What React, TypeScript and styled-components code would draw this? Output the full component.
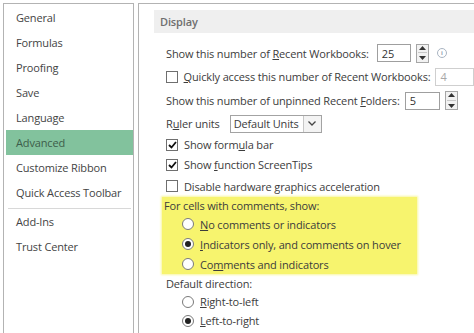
import React from "react";
import styled, { createGlobalStyle } from "styled-components";

const Global = createGlobalStyle`
  html, body { margin: 0; padding: 0; background: #fff; }
  body { font-family: "Open Sans", "Noto Sans", sans-serif; font-size: 11px; color: #3c3c3c; letter-spacing: -0.15px; }
`;

const Page = styled.div`
  display: flex;
  width: 474px;
  height: 333px;
  padding: 3px 0 0 3px;
  box-sizing: border-box;
  overflow: hidden;
  gap: 4px;
`;

const Nav = styled.div`
  width: 131px;
  flex: none;
  border: 1px solid #b3b3b3;
  border-bottom: none;
  box-sizing: border-box;
  padding-top: 1px;
  display: flex;
  flex-direction: column;
`;

const NavItem = styled.div<{ $active?: boolean }>`
  height: 25px;
  display: flex;
  align-items: center;
  padding-left: 10px;
  margin-left: 2px;
  color: ${(p) => (p.$active ? "#3d5d4a" : "#444")};
  background: ${(p) => (p.$active ? "#82c29d" : "transparent")};
`;

const NavSep = styled.div`
  height: 1px;
  background: #d8d8d8;
  margin: 3px 2px 0 4px;
`;

const Main = styled.div`
  flex: 1;
  border-left: 1px solid #b3b3b3;
  border-top: 1px solid #b3b3b3;
  padding-top: 6px;
  display: flex;
  flex-direction: column;
  min-width: 0;
`;

const Header = styled.div`
  height: 23px;
  margin-left: 15px;
  background: #efefef;
  display: flex;
  align-items: center;
  padding-left: 6px;
  font-weight: 600;
  color: #6e6e6e;
`;

const Body = styled.div`
  margin-top: 9px;
  display: flex;
  flex-direction: column;
`;

const Row = styled.div<{ $h: number; $indent?: number }>`
  height: ${(p) => p.$h}px;
  display: flex;
  align-items: center;
  padding-left: ${(p) => p.$indent ?? 27}px;
  white-space: nowrap;
`;

const Highlight = styled.div`
  margin-left: 23px;
  width: 255px;
  background: #f7f46e;
  box-shadow: 0 0 2px 1px #f9f7a0;
  display: flex;
  flex-direction: column;
`;

const Label = styled.span<{ $gap?: number }>`
  margin-right: ${(p) => p.$gap ?? 0}px;
`;

const U = styled.span`
  text-decoration: underline;
  text-underline-offset: 1px;
`;

const NumBox = styled.div<{ $disabled?: boolean; $w: number }>`
  width: ${(p) => p.$w}px;
  height: 18px;
  box-sizing: border-box;
  border: 1px solid ${(p) => (p.$disabled ? "#cfcfcf" : "#9f9f9f")};
  background: #fff;
  color: ${(p) => (p.$disabled ? "#a8a8a8" : "#333")};
  display: flex;
  align-items: center;
  padding-left: 4px;
`;

const Spinner = styled.div`
  width: 13px;
  height: 19px;
  margin-left: 5px;
  box-sizing: border-box;
  border: 1px solid #a6a6a6;
  background: #f2f2f2;
  display: flex;
  flex-direction: column;
  align-items: center;
  justify-content: space-around;
`;

const Divider = styled.div`
  width: 9px;
  height: 1px;
  background: #c8c8c8;
`;

const Info = styled.div`
  width: 8px;
  height: 8px;
  margin-left: 8px;
  border-radius: 50%;
  border: 1px solid #a9b4c2;
  color: #8e9db0;
  font-size: 6px;
  line-height: 8px;
  text-align: center;
  font-weight: 700;
`;

const Select = styled.div`
  margin-left: 10px;
  height: 18px;
  box-sizing: border-box;
  border: 1px solid #a3a3a3;
  display: flex;
  align-items: stretch;
`;

const SelectText = styled.div`
  padding: 0 4px 0 3px;
  display: flex;
  align-items: center;
`;

const SelectBtn = styled.div`
  width: 17px;
  border-left: 1px solid #c7c7c7;
  background: #f3f3f3;
  display: flex;
  align-items: center;
  justify-content: center;
`;

const Box = styled.div`
  width: 12px;
  height: 12px;
  box-sizing: border-box;
  border: 1px solid #6f6f6f;
  background: #fff;
  margin-right: 6px;
  display: flex;
  align-items: center;
  justify-content: center;
`;

const Radio = styled.div`
  width: 12px;
  height: 12px;
  box-sizing: border-box;
  border-radius: 50%;
  border: 1px solid #7a7a7a;
  background: #fff;
  margin-right: 6px;
  display: flex;
  align-items: center;
  justify-content: center;
`;

const Dot = styled.div`
  width: 6px;
  height: 6px;
  border-radius: 50%;
  background: #222;
`;

const Tri = ({ up }: { up?: boolean }) => (
  <svg width="7" height="4" viewBox="0 0 7 4">
    <polygon points={up ? "0,4 7,4 3.5,0" : "0,0 7,0 3.5,4"} fill="#333" />
  </svg>
);

const SpinBox = () => (
  <Spinner>
    <Tri up />
    <Divider />
    <Tri />
  </Spinner>
);

const Check = ({ on }: { on?: boolean }) => (
  <Box>
    {on && (
      <svg width="9" height="8" viewBox="0 0 9 8">
        <polyline points="1,4 3.5,6.5 8,1" fill="none" stroke="#111" strokeWidth="1.8" />
      </svg>
    )}
  </Box>
);

const RadioBtn = ({ on }: { on?: boolean }) => <Radio>{on && <Dot />}</Radio>;

export default function App() {
  const nav = ["General", "Formulas", "Proofing", "Save", "Language", "Advanced", "Customize Ribbon", "Quick Access Toolbar"];
  return (
    <>
      <Global />
      <Page>
        <Nav>
          {nav.map((n) => (
            <NavItem key={n} $active={n === "Advanced"}>{n}</NavItem>
          ))}
          <NavSep />
          <NavItem>Add-Ins</NavItem>
          <NavItem>Trust Center</NavItem>
        </Nav>
        <Main>
          <Header>Display</Header>
          <Body>
            <Row $h={22}>
              <Label $gap={8}>Show this number of <U>R</U>ecent Workbooks:</Label>
              <NumBox $w={34}>25</NumBox>
              <SpinBox />
              <Info>i</Info>
            </Row>
            <Row $h={25}>
              <Check />
              <Label $gap={5}><U>Q</U>uickly access this number of Recent Workbooks:</Label>
              <NumBox $w={40} $disabled>4</NumBox>
            </Row>
            <Row $h={23}>
              <Label $gap={5}>Show this number of unpinned Recent <U>F</U>olders:</Label>
              <NumBox $w={35}>5</NumBox>
              <SpinBox />
            </Row>
            <Row $h={23}>
              <Label>R<U>u</U>ler units</Label>
              <Select>
                <SelectText>Default Units</SelectText>
                <SelectBtn>
                  <svg width="8" height="5" viewBox="0 0 8 5">
                    <polyline points="0.5,0.5 4,4 7.5,0.5" fill="none" stroke="#444" strokeWidth="1.3" />
                  </svg>
                </SelectBtn>
              </Select>
            </Row>
            <Row $h={19}>
              <Check on />
              <Label>Show form<U>u</U>la bar</Label>
            </Row>
            <Row $h={21}>
              <Check on />
              <Label>Show <U>f</U>unction ScreenTips</Label>
            </Row>
            <Row $h={22}>
              <Check />
              <Label>Disable hardware <U>g</U>raphics acceleration</Label>
            </Row>
            <Highlight>
              <Row $h={17} $indent={2}>For cells with comments, show:</Row>
              <Row $h={20} $indent={20}>
                <RadioBtn />
                <Label><U>N</U>o comments or indicators</Label>
              </Row>
              <Row $h={20} $indent={20}>
                <RadioBtn on />
                <Label><U>I</U>ndicators only, and comments on hover</Label>
              </Row>
              <Row $h={20} $indent={20}>
                <RadioBtn />
                <Label>Co<U>m</U>ments and indicators</Label>
              </Row>
            </Highlight>
            <Row $h={18}>Default direction:</Row>
            <Row $h={19} $indent={43}>
              <RadioBtn />
              <Label><U>R</U>ight-to-left</Label>
            </Row>
            <Row $h={19} $indent={43}>
              <RadioBtn on />
              <Label><U>L</U>eft-to-right</Label>
            </Row>
          </Body>
        </Main>
      </Page>
    </>
  );
}
